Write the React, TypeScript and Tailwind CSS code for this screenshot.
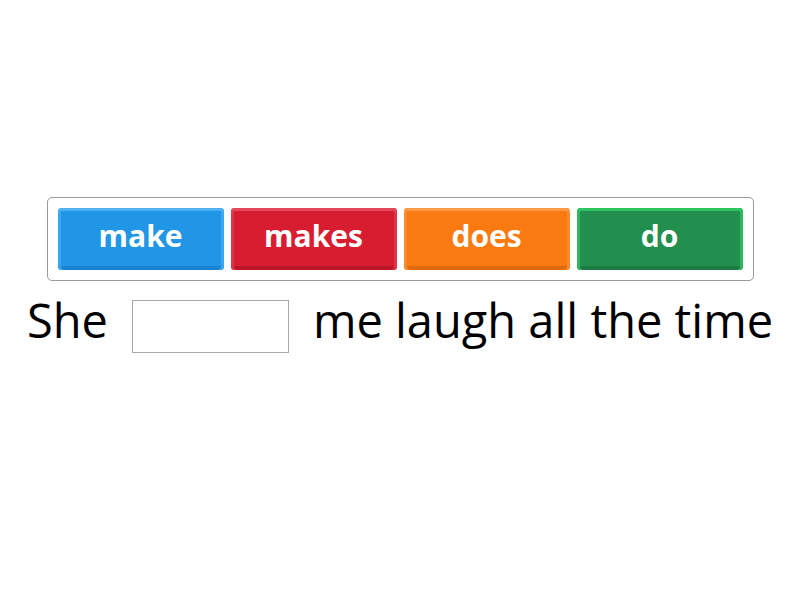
const words = [
  { label: 'make', cls: 'bg-[#2196e6] shadow-[inset_0_3px_0_#4eb0f2,inset_3px_0_0_#3aa6ef,inset_-3px_0_0_#3aa6ef,inset_0_-4px_0_#1a84d0]' },
  { label: 'makes', cls: 'bg-[#d91d30] shadow-[inset_0_3px_0_#e2475a,inset_3px_0_0_#de3447,inset_-3px_0_0_#de3447,inset_0_-4px_0_#bb1628]' },
  { label: 'does', cls: 'bg-[#fa7a12] shadow-[inset_0_3px_0_#fd9a4a,inset_3px_0_0_#fb8a2e,inset_-3px_0_0_#fb8a2e,inset_0_-4px_0_#dd6a0c]' },
  { label: 'do', cls: 'bg-[#238f4e] shadow-[inset_0_3px_0_#2ec462,inset_3px_0_0_#2cb95d,inset_-3px_0_0_#2cb95d,inset_0_-4px_0_#1d7a42]' },
]

export default function App() {
  return (
    <div className="w-[800px] h-[600px] bg-white flex flex-col items-center pt-[197px] font-['Open_Sans',sans-serif]">
      <div className="w-[707px] h-[84px] border border-[#9a9a9a] rounded-[5px] flex items-center gap-[7px] px-[10px]">
        {words.map((w) => (
          <div
            key={w.label}
            className={`w-[166px] h-[62px] rounded-[4px] flex items-center justify-center text-white font-bold text-[30px] leading-none pb-[6px] ${w.cls}`}
          >
            {w.label}
          </div>
        ))}
      </div>
      <div className="mt-[10px] flex items-center text-[47px] text-black leading-none h-[70px]">
        <span className="pb-[12px]">She</span>
        <div className="w-[157px] h-[53px] border border-[#a8a8a8] bg-white mx-[24px]" />
        <span className="pb-[12px]">me laugh all the time</span>
      </div>
    </div>
  )
}
